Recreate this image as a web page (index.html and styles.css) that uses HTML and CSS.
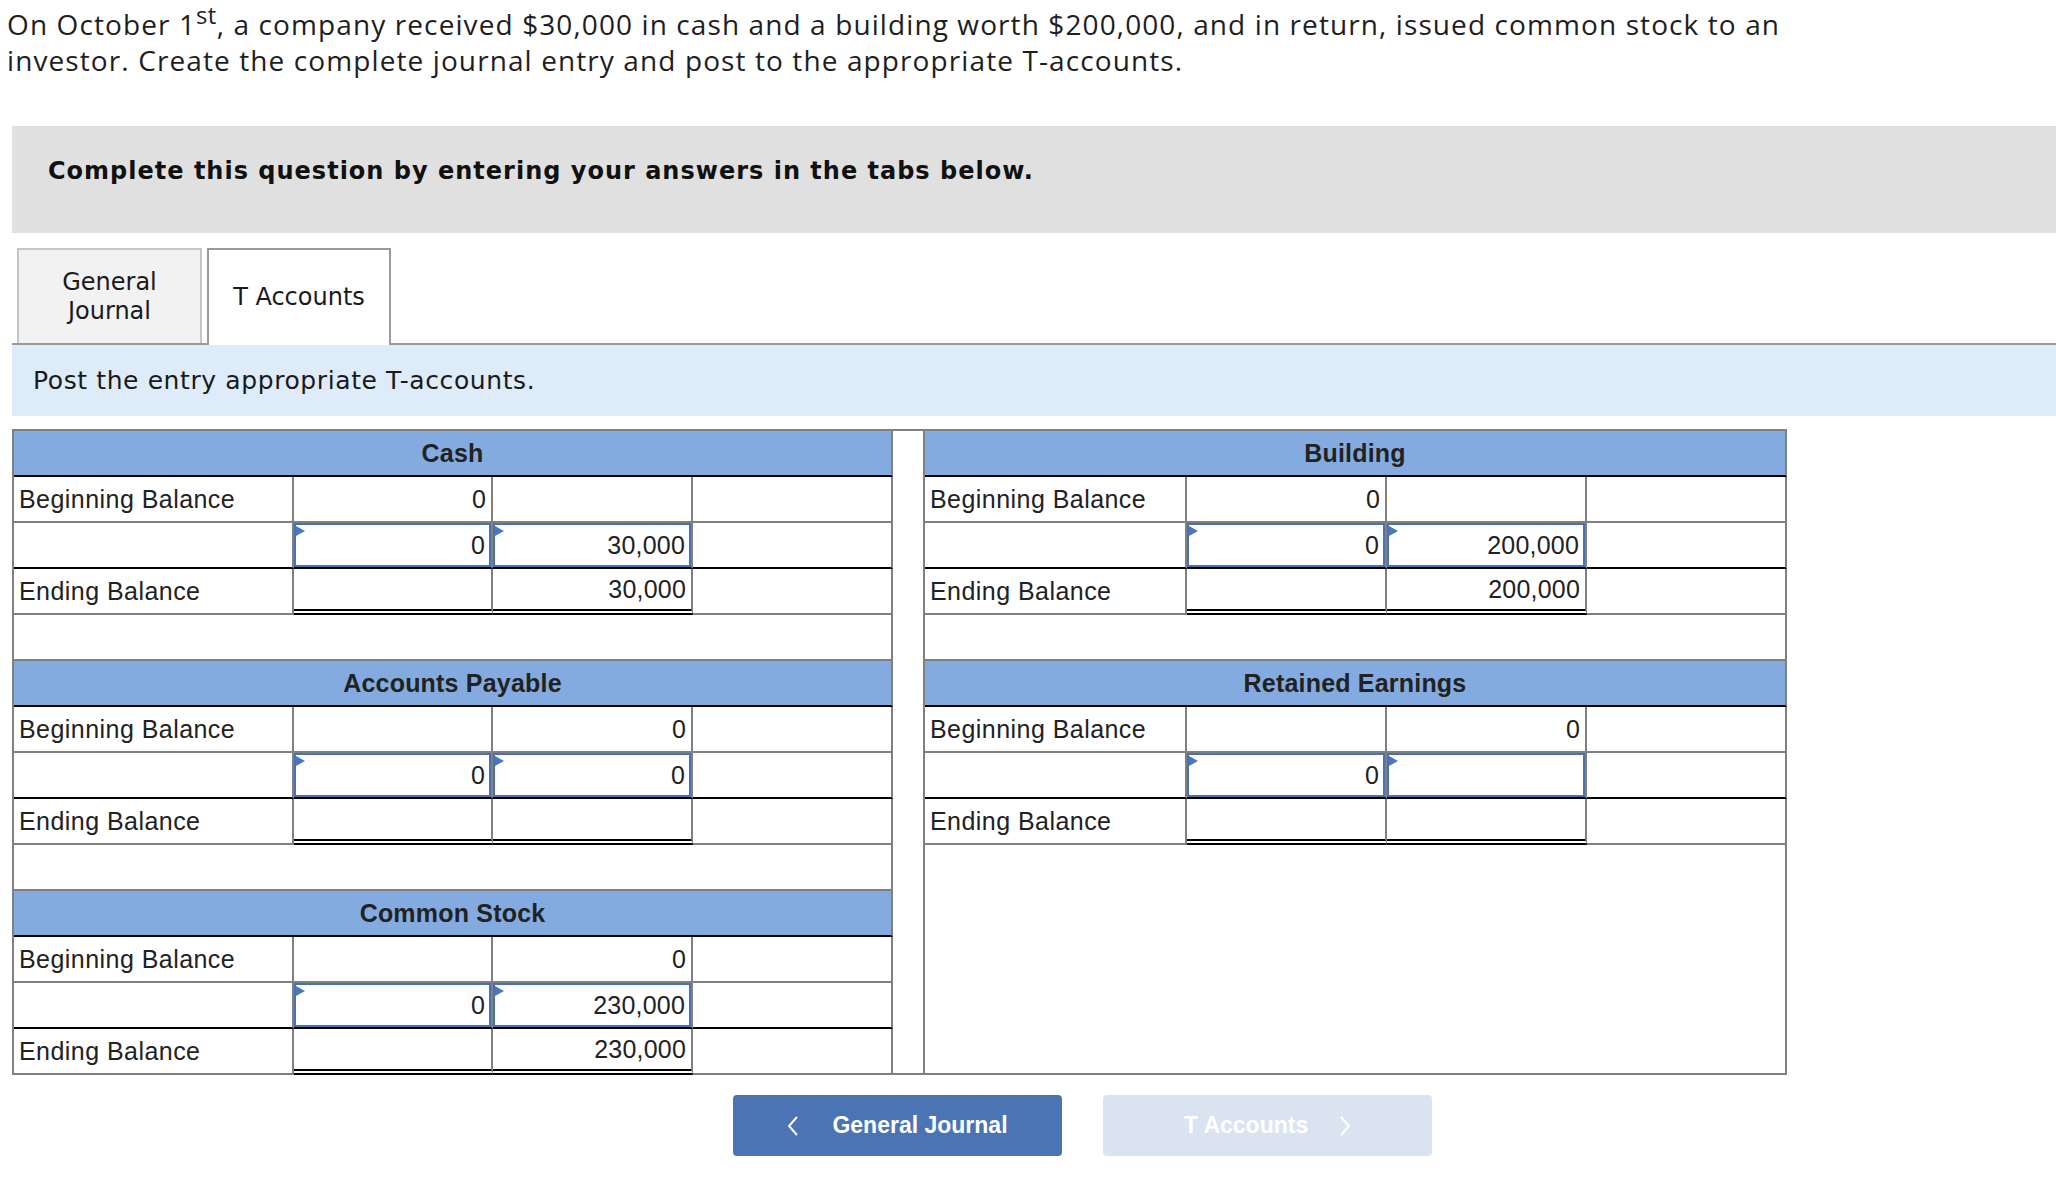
FILE: index.html
```html
<!DOCTYPE html>
<html lang="en">
<head>
<meta charset="utf-8">
<title>T Accounts</title>
<link rel="stylesheet" href="styles.css">
</head>
<body>
<p class="question">On October 1<sup>st</sup>, a company received $30,000 in cash and a building worth $200,000, and in return, issued common stock to an<br>investor. Create the complete journal entry and post to the appropriate T-accounts.</p>

<div class="instructions">Complete this question by entering your answers in the tabs below.</div>

<div class="tabs">
  <div class="tab">General<br>Journal</div>
  <div class="tab active">T Accounts</div>
</div>
<div class="prompt">Post the entry appropriate T-accounts.</div>

<div class="taccts">
  <div class="panel left">
    <div class="c hdr">Cash</div>
    <div class="c lbl">Beginning Balance</div><div class="c num">0</div><div class="c num"></div><div class="c num"></div>
    <div class="c lbl dark"></div><div class="c num dark fld"><div class="inp">0</div></div><div class="c num dark fld"><div class="inp">30,000</div></div><div class="c num dark"></div>
    <div class="c lbl">Ending Balance</div><div class="c num dbl"></div><div class="c num dbl">30,000</div><div class="c num"></div>
    <div class="c spacer"></div>

    <div class="c hdr">Accounts Payable</div>
    <div class="c lbl">Beginning Balance</div><div class="c num"></div><div class="c num">0</div><div class="c num"></div>
    <div class="c lbl dark"></div><div class="c num dark fld"><div class="inp">0</div></div><div class="c num dark fld"><div class="inp">0</div></div><div class="c num dark"></div>
    <div class="c lbl">Ending Balance</div><div class="c num dbl"></div><div class="c num dbl"></div><div class="c num"></div>
    <div class="c spacer"></div>

    <div class="c hdr">Common Stock</div>
    <div class="c lbl">Beginning Balance</div><div class="c num"></div><div class="c num">0</div><div class="c num"></div>
    <div class="c lbl dark"></div><div class="c num dark fld"><div class="inp">0</div></div><div class="c num dark fld"><div class="inp">230,000</div></div><div class="c num dark"></div>
    <div class="c lbl">Ending Balance</div><div class="c num dbl"></div><div class="c num dbl">230,000</div><div class="c num"></div>
  </div>

  <div class="sep"></div>

  <div class="panel right">
    <div class="c hdr">Building</div>
    <div class="c lbl">Beginning Balance</div><div class="c num">0</div><div class="c num"></div><div class="c num"></div>
    <div class="c lbl dark"></div><div class="c num dark fld"><div class="inp">0</div></div><div class="c num dark fld"><div class="inp">200,000</div></div><div class="c num dark"></div>
    <div class="c lbl">Ending Balance</div><div class="c num dbl"></div><div class="c num dbl">200,000</div><div class="c num"></div>
    <div class="c spacer"></div>

    <div class="c hdr">Retained Earnings</div>
    <div class="c lbl">Beginning Balance</div><div class="c num"></div><div class="c num">0</div><div class="c num"></div>
    <div class="c lbl dark"></div><div class="c num dark fld"><div class="inp">0</div></div><div class="c num dark fld"><div class="inp"></div></div><div class="c num dark"></div>
    <div class="c lbl">Ending Balance</div><div class="c num dbl"></div><div class="c num dbl"></div><div class="c num"></div>
    <div class="c blank"></div>
  </div>
</div>

<div class="navbtns">
  <div class="btn prev">
    <svg class="chev" width="12" height="20" viewBox="0 0 12 20"><polyline points="10,1 2,10 10,19" fill="none" stroke="#fff" stroke-width="2"/></svg>
    <span>General Journal</span>
  </div>
  <div class="btn next">
    <span>T Accounts</span>
    <svg class="chev" width="12" height="20" viewBox="0 0 12 20"><polyline points="2,1 10,10 2,19" fill="none" stroke="#fff" stroke-width="2"/></svg>
  </div>
</div>
</body>
</html>
```

FILE: styles.css
```css
html, body {
  margin: 0;
  background: #ffffff;
}

.question {
  margin: 0;
  padding: 6px 0 0 7px;
  font-family: "Open Sans", "Liberation Sans", sans-serif;
  font-size: 28px;
  line-height: 36px;
  letter-spacing: 1.1px;
  color: #1e1e1e;
}

.question sup {
  font-size: 0.85em;
  line-height: 0;
  vertical-align: 0.45em;
  letter-spacing: 0.5px;
}

.instructions {
  margin: 48px 0 0 12px;
  height: 107px;
  box-sizing: border-box;
  padding: 32px 0 0 36px;
  background: #e0e0e0;
  font-family: "DejaVu Sans", Verdana, sans-serif;
  font-weight: bold;
  font-size: 24px;
  line-height: 27px;
  letter-spacing: 1px;
  color: #111111;
}

.tabs {
  margin: 15px 0 0 12px;
  padding-left: 5px;
  display: flex;
  gap: 5px;
  border-bottom: 2px solid #9a9a9a;
  height: 95px;
}

.tab {
  width: 185px;
  height: 95px;
  box-sizing: border-box;
  border: 2px solid #c6c6c6;
  border-bottom: none;
  background: #f2f2f2;
  display: flex;
  align-items: center;
  justify-content: center;
  text-align: center;
  font-family: "DejaVu Sans", Verdana, sans-serif;
  font-size: 24px;
  line-height: 29px;
  color: #1a1a1a;
}

.tab.active {
  width: 184px;
  height: 97px;
  border-color: #9a9a9a;
  background: #ffffff;
  position: relative;
  z-index: 1;
}

.prompt {
  margin-left: 12px;
  height: 71px;
  box-sizing: border-box;
  padding-left: 21px;
  background: #deebf8;
  display: flex;
  align-items: center;
  font-family: "DejaVu Sans", Verdana, sans-serif;
  font-size: 25px;
  letter-spacing: 0.6px;
  color: #1a1a1a;
}

.taccts {
  display: flex;
  width: max-content;
  margin: 13px 0 0 12px;
  border-top: 2px solid #808080;
  border-left: 2px solid #808080;
}

.panel {
  display: grid;
  grid-auto-rows: 46px;
}

.panel.left {
  grid-template-columns: 280px 199px 200px 200px;
}

.panel.right {
  grid-template-columns: 262px 200px 200px 200px;
}

.sep {
  width: 32px;
  box-sizing: border-box;
  border-right: 2px solid #808080;
  border-bottom: 2px solid #808080;
}

.c {
  box-sizing: border-box;
  border-right: 2px solid #808080;
  border-bottom: 2px solid #808080;
  display: flex;
  align-items: center;
  font-family: "Liberation Sans", Arial, sans-serif;
  font-size: 25px;
  letter-spacing: 0.2px;
  color: #222222;
  white-space: nowrap;
}

.lbl {
  padding-left: 5px;
  letter-spacing: 0.45px;
}

.num {
  justify-content: flex-end;
  padding-right: 5px;
}

.hdr {
  grid-column: 1 / -1;
  justify-content: center;
  background: #84abdf;
  font-weight: bold;
  border-bottom-color: #000000;
}

.dark {
  border-bottom-color: #000000;
}

.dbl {
  border-bottom: 6px double #000000;
}

.spacer {
  grid-column: 1 / -1;
}

.blank {
  grid-column: 1 / -1;
  grid-row: span 5;
}

.fld {
  padding: 0;
  align-items: stretch;
}

.inp {
  flex: 1;
  position: relative;
  box-sizing: border-box;
  border: 2px solid #4a72b3;
  display: flex;
  align-items: center;
  justify-content: flex-end;
  padding-right: 4px;
  background: #ffffff;
}

.inp::before {
  content: "";
  position: absolute;
  left: 0;
  top: 1px;
  width: 0;
  height: 0;
  border-left: 9px solid #4a78c0;
  border-top: 5px solid transparent;
  border-bottom: 5px solid transparent;
}

.navbtns {
  display: flex;
  gap: 41px;
  margin: 20px 0 0 733px;
}

.btn {
  width: 329px;
  height: 61px;
  border-radius: 4px;
  display: flex;
  align-items: center;
  justify-content: center;
  gap: 33px;
  font-family: "Liberation Sans", Arial, sans-serif;
  font-weight: bold;
  font-size: 23px;
  color: #ffffff;
}

.btn.prev {
  background: #4a74b3;
}

.btn.next {
  background: #dae4f0;
  gap: 31px;
}

.chev {
  display: block;
}
```
